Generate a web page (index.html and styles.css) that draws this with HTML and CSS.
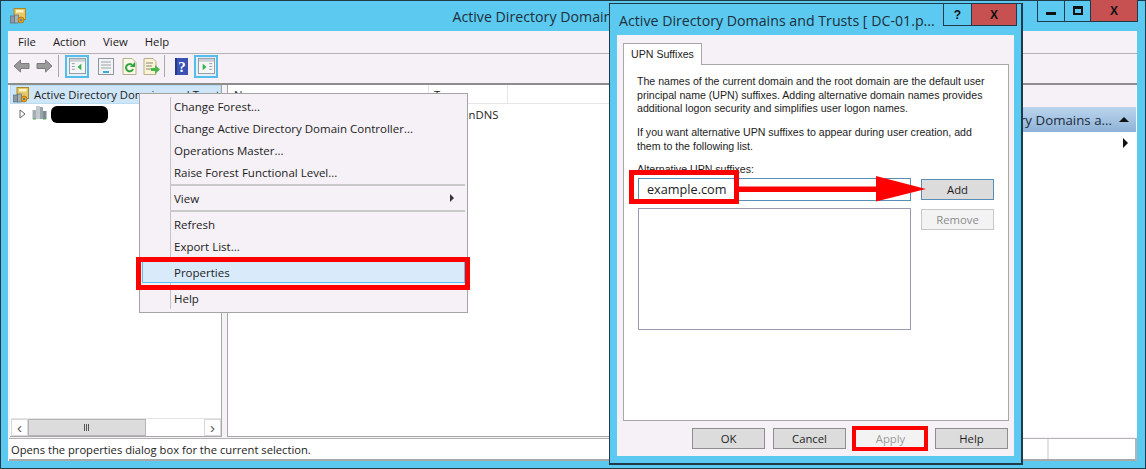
FILE: index.html
```html
<!DOCTYPE html>
<html lang="en">
<head>
<meta charset="utf-8">
<title>Active Directory Domains and Trusts</title>
<link rel="stylesheet" href="styles.css">
</head>
<body>
<svg class="defs" width="0" height="0">
  <defs>
    <symbol id="adicon" viewBox="0 0 16 16">
      <rect x="4" y="0.5" width="11.5" height="11" fill="#e8c766" stroke="#a88a2c"/>
      <rect x="6" y="2" width="7.5" height="2.5" fill="#fff6c8"/>
      <rect x="0.5" y="8" width="4" height="7" fill="#8c9aa4" stroke="#5f6b74" stroke-width="0.7"/>
      <rect x="4.5" y="7" width="4" height="8" fill="#a6b2ba" stroke="#5f6b74" stroke-width="0.7"/>
      <circle cx="11" cy="12" r="3" fill="#e8a020" stroke="#9a6a10" stroke-width="0.7"/>
      <circle cx="11" cy="12" r="1" fill="#3a74c0"/>
    </symbol>
    <symbol id="panel" viewBox="0 0 20 19">
      <rect x="1.5" y="1.5" width="17" height="16" fill="#f4f6f7" stroke="#8e979c"/>
      <rect x="2" y="2" width="16" height="3" fill="#c8d0d5"/>
    </symbol>
  </defs>
</svg>
<div class="window">
  <header class="titlebar">
    <svg class="app-icon"><use href="#adicon"/></svg>
    <span class="title">Active Directory Domains and Trusts</span>
    <div class="controls">
      <span class="ctl ctl-min"><i class="glyph-min"></i></span>
      <span class="ctl ctl-max"><i class="glyph-max"></i></span>
      <span class="ctl ctl-close">X</span>
    </div>
  </header>
  <main class="client">
    <nav class="menubar">
      <span>File</span><span>Action</span><span>View</span><span>Help</span>
    </nav>
    <div class="toolbar">
      <svg class="tool tool-back" width="17" height="14" viewBox="0 0 17 14"><path d="M1 7 7.5 1v3.5H16v5H7.500V13z" fill="#9a9a9a" stroke="#7c7c7c"/></svg>
      <svg class="tool tool-fwd" width="17" height="14" viewBox="0 0 17 14"><path d="M16 7 9.500 1v3.500H1v5h8.500V13z" fill="#9a9a9a" stroke="#7c7c7c"/></svg>
      <i class="tool-sep"></i>
      <span class="tool-toggle">
        <svg width="19" height="18" viewBox="0 0 20 19"><use href="#panel"/><path d="M4 7h3M4 10h3M4 13h3" stroke="#8e979c"/><path d="M14 7v7l-4-3.500z" fill="#36b24a"/></svg>
      </span>
      <svg class="tool tool-list" width="16" height="17" viewBox="0 0 16 17"><rect x="0.500" y="0.500" width="15" height="16" fill="#f1f4f6" stroke="#8e979c"/><path d="M3 4h10M3 7h10M3 10h10" stroke="#9aa4aa"/><path d="M5 14h6" stroke="#3fa9dc" stroke-width="2"/></svg>
      <svg class="tool tool-refresh" width="15" height="17" viewBox="0 0 15 17"><path d="M1 .500h9l4 4v12H1z" fill="#fbf7e6" stroke="#b5ad8c"/><path d="M11 11a3.600 3.600 0 1 1-1-4" fill="none" stroke="#2fa33f" stroke-width="2"/><path d="M8 9h5V4z" fill="#2fa33f"/></svg>
      <svg class="tool tool-export" width="17" height="17" viewBox="0 0 17 17"><path d="M1 .500h9l3 3v13H1z" fill="#fbf3d4" stroke="#b5ad8c"/><path d="M3 5h7M3 8h6M3 11h5" stroke="#8a8a78"/><path d="M8 10h4V7l5 4.500-5 4.500v-3H8z" fill="#48b648"/></svg>
      <i class="tool-sep tool-sep-b"></i>
      <svg class="tool tool-help" width="13" height="17" viewBox="0 0 13 17"><rect width="13" height="17" fill="#3b52b4"/><rect x="0" y="0" width="2" height="17" fill="#26388a"/><text x="7" y="13.500" text-anchor="middle" class="help-q">?</text></svg>
      <span class="tool-toggle tool-toggle-b">
        <svg width="19" height="18" viewBox="0 0 20 19"><use href="#panel"/><path d="M13 7h3M13 10h3M13 13h3" stroke="#8e979c"/><path d="M6 7v7l4-3.500z" fill="#36b24a"/></svg>
      </span>
    </div>
    <div class="panes">
      <section class="tree">
        <div class="tree-root">
          <svg class="tree-icon"><use href="#adicon"/></svg>
          <span class="tree-root-text">Active Directory Domains and Trusts</span>
        </div>
        <div class="tree-child">
          <svg class="expander" width="7" height="10" viewBox="0 0 7 10"><path d="M1 1v8l5-4z" fill="#fff" stroke="#666"/></svg>
          <svg class="forest-icon" width="15" height="15" viewBox="0 0 15 15"><rect x="0.500" y="5" width="4.500" height="9" fill="#a3aeb5"/><rect x="4" y="1" width="4" height="13" fill="#c2cace"/><rect x="8" y="2" width="3" height="12" fill="#98a5ad"/><rect x="11" y="6" width="3.500" height="8" fill="#7f8c94"/><path d="M1 14h3M11 14h3" stroke="#3fae4a"/></svg>
          <span class="redaction"></span>
        </div>
        <div class="hscroll">
          <span class="sb-btn">&lsaquo;</span>
          <span class="sb-thumb"><i></i><i></i><i></i></span>
          <span class="sb-track"></span>
          <span class="sb-btn">&rsaquo;</span>
        </div>
      </section>
      <section class="list">
        <div class="list-head">
          <span class="col-a">N</span><span class="col-b">T</span><span class="col-c"></span>
        </div>
        <div class="list-row"><span class="col-a"></span><span class="col-b">DomainDNS</span></div>
      </section>
      <aside class="actions">
        <div class="actions-top"></div>
        <div class="actions-head"><span class="actions-name">Active Directory Domains a...</span><i class="tri-up"></i></div>
        <div class="actions-body"><i class="tri-right"></i></div>
      </aside>
    </div>
    <footer class="status">
      <span class="status-main">Opens the properties dialog box for the current selection.</span>
      <span class="status-side"></span>
    </footer>
  </main>
</div>

<div class="context-menu">
  <div class="mi">Change Forest...</div>
  <div class="mi">Change Active Directory Domain Controller...</div>
  <div class="mi">Operations Master...</div>
  <div class="mi">Raise Forest Functional Level...</div>
  <hr class="msep">
  <div class="mi mi-sub">View<i class="tri-sub"></i></div>
  <hr class="msep">
  <div class="mi">Refresh</div>
  <div class="mi">Export List...</div>
  <hr class="msep msep-hidden">
  <div class="mi mi-active">Properties</div>
  <hr class="msep msep-hidden">
  <div class="mi">Help</div>
</div>

<div class="dialog">
  <header class="dlg-title">
    <span class="dlg-title-text">Active Directory Domains and Trusts [ DC-01.p...</span>
    <span class="dlg-ctl dlg-help">?</span>
    <span class="dlg-ctl dlg-close">X</span>
  </header>
  <div class="dlg-body">
    <div class="tab">UPN Suffixes</div>
    <div class="tab-panel">
      <p class="para">The names of the current domain and the root domain are the default user<br>principal name (UPN) suffixes. Adding alternative domain names provides<br>additional logon security and simplifies user logon names.</p>
      <p class="para">If you want alternative UPN suffixes to appear during user creation, add<br>them to the following list.</p>
      <label class="field-label">Alternative UPN suffixes:</label>
      <div class="field-grid">
        <div class="input">example.com</div>
        <div class="btn btn-add">Add</div>
        <div class="listbox"></div>
        <div class="btn btn-disabled">Remove</div>
      </div>
    </div>
    <div class="dlg-buttons">
      <div class="btn">OK</div>
      <div class="btn">Cancel</div>
      <div class="btn btn-apply">Apply</div>
      <div class="btn">Help</div>
    </div>
  </div>
</div>

<div class="mark mark-props"></div>
<div class="mark mark-input"></div>
<div class="mark mark-apply"></div>
<svg class="arrow" width="190" height="26" viewBox="0 0 190 26"><path d="M0 10.500H139V0L189 13 139 25.500V16H0z" fill="#ff0000"/></svg>
</body>
</html>
```
FILE: styles.css
```css
* { box-sizing: border-box; }
html, body { margin: 0; padding: 0; }
body {
  width: 1146px;
  height: 469px;
  overflow: hidden;
  position: relative;
  background: #5ccaf0;
  font-family: "Open Sans", "Noto Sans", sans-serif;
  font-size: 11.3px;
  color: #1c1c1c;
}
.defs { position: absolute; }
i { display: block; }

/* main window */
.window {
  height: 469px;
  border: 1px solid #1f3b4a;
  background: #5ccaf0;
  padding: 0 8px 7px 7px;
  display: flex;
  flex-direction: column;
}
.titlebar {
  height: 30px;
  flex: none;
  position: relative;
  display: flex;
  align-items: center;
  justify-content: center;
}
.app-icon { position: absolute; left: 2px; top: 7px; width: 16px; height: 16px; }
.title { font-size: 14.2px; color: #1d2f3a; }
.controls {
  position: absolute;
  right: -1px;
  top: -1px;
  height: 22px;
  display: flex;
  border: 1px solid #1f3b4a;
  border-top: 0;
}
.ctl { display: flex; align-items: center; justify-content: center; height: 21px; }
.ctl-min { width: 27px; border-right: 1px solid #1f3b4a; }
.ctl-max { width: 26px; border-right: 1px solid #1f3b4a; }
.ctl-close {
  width: 46px;
  background: #c75050;
  color: #111;
  font: bold 12px "Liberation Sans", sans-serif;
}
.glyph-min { width: 10px; height: 3px; background: #111; margin-top: 6px; }
.glyph-max { width: 10px; height: 9px; border: 2px solid #111; border-top-width: 3px; }

.client {
  flex: 1;
  display: flex;
  flex-direction: column;
  background: #f5f1f6;
  min-height: 0;
}
.menubar {
  height: 23px;
  flex: none;
  display: flex;
  align-items: center;
  gap: 17px;
  padding-left: 10px;
  border-bottom: 1px solid #b4b4b4;
  padding-bottom: 1px;
}
.toolbar {
  height: 31px;
  flex: none;
  display: flex;
  align-items: center;
  padding: 0 0 5px 5px;
  border-bottom: 2px solid #8d8d8d;
}
.tool { flex: none; }
.tool-fwd { margin-left: 6px; }
.tool-sep { width: 1px; height: 22px; background: #a9a9a9; margin: 0 6px 0 5px; }
.tool-toggle {
  width: 24px;
  height: 23px;
  flex: none;
  border: 2px solid #55bdec;
  background: #e6f1f8;
  display: flex;
  align-items: center;
  justify-content: center;
}
.tool-list { margin-left: 9px; }
.tool-refresh { margin-left: 8px; }
.tool-export { margin-left: 6px; }
.tool-sep-b { margin: 0 10px 0 4px; }
.help-q { font: bold 15px "Liberation Serif", serif; fill: #fff; }
.tool-toggle-b { margin-left: 6px; }

.panes {
  flex: 1;
  min-height: 0;
  display: flex;
  padding-left: 2px;
  padding-bottom: 1px;
}
.tree {
  width: 212px;
  flex: none;
  background: #fff;
  display: flex;
  flex-direction: column;
  border-right: 1px solid #a8a8a8;
  border-bottom: 1px solid #a8a8a8;
}
.tree-root {
  height: 19px;
  flex: none;
  display: flex;
  align-items: center;
  padding-left: 2px;
  background: #cfe6f8;
  border: 1px solid #b9dcf5;
  overflow: hidden;
  white-space: nowrap;
}
.tree-icon { width: 16px; height: 16px; flex: none; }
.tree-root-text { margin-left: 5px; }
.tree-child {
  flex: 1;
  display: flex;
  align-items: flex-start;
  padding: 1px 0 0 9px;
}
.expander { margin-top: 4px; flex: none; }
.forest-icon { margin-left: 6px; flex: none; }
.redaction {
  width: 57px;
  height: 17px;
  margin-left: 4px;
  margin-top: 1px;
  background: #000;
  border-radius: 6px;
}
.hscroll {
  height: 18px;
  flex: none;
  display: flex;
  margin-left: 1px;
  border-top: 1px solid #e4e4e4;
  background: #fff;
}
.sb-btn {
  width: 17px;
  flex: none;
  display: flex;
  align-items: center;
  justify-content: center;
  color: #555;
  font: 15px/1 "Liberation Sans", sans-serif;
  border: 1px solid #d8d8d8;
  background: #fdfdfd;
}
.sb-thumb {
  width: 118px;
  flex: none;
  background: #dcdcdc;
  border: 1px solid #b5b5b5;
  display: flex;
  align-items: center;
  justify-content: center;
  gap: 1px;
  padding-right: 2px;
}
.sb-thumb i { width: 1px; height: 7px; background: #555; }
.sb-track { flex: 1; }

.list {
  flex: 1;
  min-width: 0;
  margin-left: 5px;
  background: #fff;
  border-left: 1px solid #a8a8a8;
  border-bottom: 1px solid #a8a8a8;
  position: relative;
}
.list-head {
  height: 19px;
  display: flex;
  align-items: center;
  border-bottom: 1px solid #e6e6e6;
  white-space: nowrap;
}
.list-row { display: flex; height: 20px; align-items: center; }
.col-a { width: 201px; padding-left: 6px; flex: none; height: 100%; }
.col-b { width: 79px; padding-left: 5px; flex: none; height: 100%; display: flex; align-items: center; }
.list-head .col-a, .list-head .col-b { border-right: 1px solid #e6e6e6; display: flex; align-items: center; }

.actions {
  width: 215px;
  flex: none;
  display: flex;
  flex-direction: column;
  background: #fff;
  padding-right: 1px;
}
.actions-top { height: 22px; flex: none; background: #f5f1f6; }
.actions-head {
  height: 25px;
  flex: none;
  display: flex;
  align-items: center;
  justify-content: flex-end;
  gap: 7px;
  padding-right: 7px;
  background: linear-gradient(#bcd5ee, #8eb2d6);
  color: #1c2c3c;
  font-size: 13.3px;
  white-space: nowrap;
}
.actions-body {
  flex: 1;
  background: #fff;
  display: flex;
  justify-content: flex-end;
  padding: 6px 8px 0 0;
}
.tri-up {
  width: 0; height: 0;
  border-left: 5px solid transparent;
  border-right: 5px solid transparent;
  border-bottom: 5px solid #111;
}
.tri-right {
  width: 0; height: 0;
  border-left: 5px solid #111;
  border-top: 5px solid transparent;
  border-bottom: 5px solid transparent;
}

.status {
  height: 23px;
  flex: none;
  display: flex;
  margin-left: 1px;
  background: #fff;
  border-top: 1px solid #b4b4b4;
  border-bottom: 2px solid #a8a8a8;
  border-right: 2px solid #b4b4b4;
  font-size: 11.2px;
}
.status-main { width: 1040px; flex: none; padding-left: 2px; border-right: 2px solid #e2e2e2; display: flex; align-items: center; }
.status-side { flex: 1; }

/* context menu */
.context-menu {
  position: absolute;
  left: 139px;
  top: 93px;
  width: 329px;
  height: 220px;
  background: #f5f1f6;
  border: 1px solid #a4a4a4;
  padding: 2px 2px 0 2px;
  display: flex;
  flex-direction: column;
  font-size: 11.5px;
}
.context-menu::before {
  content: "";
  position: absolute;
  left: 30px;
  top: 3px;
  bottom: 3px;
  width: 1px;
  background: #c4c4c4;
}
.mi {
  height: 22px;
  flex: none;
  padding-left: 32px;
  display: flex;
  align-items: center;
  justify-content: space-between;
  padding-right: 11px;
  position: relative;
  top: -1px;
}
.msep {
  height: 2px;
  flex: none;
  width: 294px;
  margin: 1px 0 1px 29px;
  border: 0;
  background: #c9c9c9;
  position: relative;
  top: -1px;
}
.msep-hidden { background: transparent; }
.mi-active {
  background: #d9ebfb;
  border: 1px solid #5ac0ee;
  padding-left: 31px;
}
.tri-sub {
  width: 0; height: 0;
  border-left: 4px solid #333;
  border-top: 4px solid transparent;
  border-bottom: 4px solid transparent;
}

/* dialog */
.dialog {
  position: absolute;
  left: 609px;
  top: 3px;
  width: 414px;
  height: 462px;
  background: #5ccaf0;
  border: 1px solid #1f3b4a;
  border-width: 1px 2px 2px 1px;
  padding: 0 7px 7px 7px;
  display: flex;
  flex-direction: column;
}
.dlg-title {
  height: 31px;
  flex: none;
  position: relative;
  display: flex;
  align-items: center;
}
.dlg-title-text { font-size: 14.2px; color: #1d2f3a; white-space: nowrap; margin-left: 2px; margin-top: 1px; }
.dlg-ctl {
  position: absolute;
  top: 0;
  height: 22px;
  display: flex;
  align-items: center;
  justify-content: center;
  border: 1px solid #1f3b4a;
  border-top: 0;
  font: bold 12px "Liberation Sans", sans-serif;
  color: #111;
}
.dlg-help { left: 326px; width: 29px; }
.dlg-close { left: 354px; width: 46px; background: #c75050; }
.dlg-body {
  flex: 1;
  min-height: 0;
  background: #f5f1f6;
  padding: 8px 5px 0 6px;
  display: flex;
  flex-direction: column;
}
.tab {
  width: 79px;
  height: 22px;
  flex: none;
  background: #fff;
  border: 1px solid #a8a8a8;
  border-bottom: 0;
  font: 10.6px/20px "Liberation Sans", sans-serif;
  text-align: center;
  position: relative;
  z-index: 1;
  margin-bottom: -1px;
}
.tab-panel {
  height: 357px;
  flex: none;
  background: #fff;
  border: 1px solid #a8a8a8;
  padding: 10px 0 0 13px;
  font: 10.6px/13.700px "Liberation Sans", sans-serif;
}
.para { margin: 0 0 10px; white-space: nowrap; }
.field-label { display: block; margin-top: -1px; height: 13px; }
.field-grid {
  display: grid;
  grid-template-columns: 273px 73px;
  grid-template-rows: 23px 122px;
  column-gap: 10px;
  row-gap: 7px;
  margin: 2px 0 0 1px;
}
.input {
  border: 1px solid #5a8fb5;
  padding-left: 8px;
  font: 12.700px/21px "Open Sans", sans-serif;
}
.listbox { border: 1px solid #9a9ab0; background: #fff; }
.btn {
  width: 73px;
  height: 21px;
  background: #dcdcdc;
  border: 1px solid #8e8e8e;
  display: flex;
  align-items: center;
  justify-content: center;
  font: 11.300px "Open Sans", sans-serif;
}
.btn-add { border-color: #5a8fb5; margin-top: 1px; }
.btn-disabled { background: #f3f3f3; border-color: #c8c8c8; color: #8c8c8c; margin-top: 1px; }
.btn-apply { background: #f3f3f3; border-color: #c8c8c8; color: #9a9a9a; }
.dlg-buttons {
  display: flex;
  justify-content: flex-end;
  gap: 8px;
  padding: 7px 1px 0 0;
}

/* annotations */
.mark { position: absolute; border: 5px solid #ff0000; }
.mark-props { left: 136px; top: 257px; width: 334px; height: 33px; }
.mark-input { left: 629px; top: 170px; width: 110px; height: 34px; }
.mark-apply { left: 852px; top: 426px; width: 76px; height: 25px; border-width: 4px; }
.arrow { position: absolute; left: 737px; top: 176px; }
```
